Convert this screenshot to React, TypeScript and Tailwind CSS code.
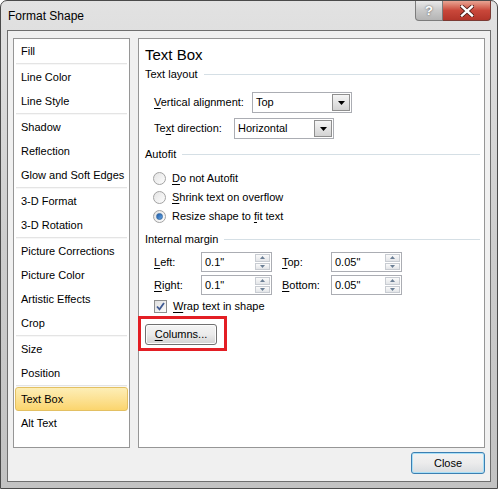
import React from 'react';

const groups: string[][] = [
  ['Fill'],
  ['Line Color', 'Line Style'],
  ['Shadow', 'Reflection', 'Glow and Soft Edges'],
  ['3-D Format', '3-D Rotation'],
  ['Picture Corrections', 'Picture Color', 'Artistic Effects', 'Crop'],
  ['Size', 'Position'],
  ['Text Box', 'Alt Text'],
];

const U = ({ children }: { children: React.ReactNode }) => (
  <span className="underline underline-offset-[2px] decoration-[1px]">{children}</span>
);

function Dropdown({ value, className }: { value: string; className: string }) {
  return (
    <div className={`flex h-[21px] items-stretch border border-[#abadb3] bg-white ${className}`}>
      <span className="flex-1 pl-[3px] leading-[19px]">{value}</span>
      <div className="m-[1px] flex w-[18px] items-center justify-center border border-[#8f8f8f] bg-gradient-to-b from-[#f5f5f5] to-[#d3d3d3]">
        <svg width="7" height="4" viewBox="0 0 7 4">
          <path d="M0 0h7L3.5 4z" fill="#000" />
        </svg>
      </div>
    </div>
  );
}

function Spinner({ value }: { value: string }) {
  return (
    <div className="flex h-[20px] w-[71px] border border-[#abadb3] bg-white">
      <span className="flex-1 pl-[3px] leading-[18px]">{value}</span>
      <div className="m-[1px] flex w-[15px] flex-col gap-[1px]">
        <div className="flex flex-1 items-center justify-center border border-[#c8ccd2] bg-gradient-to-b from-[#fafafa] to-[#e3e5e8]">
          <svg width="5" height="3" viewBox="0 0 5 3">
            <path d="M0 3h5L2.5 0z" fill="#6b7f95" />
          </svg>
        </div>
        <div className="flex flex-1 items-center justify-center border border-[#c8ccd2] bg-gradient-to-b from-[#fafafa] to-[#e3e5e8]">
          <svg width="5" height="3" viewBox="0 0 5 3">
            <path d="M0 0h5L2.5 3z" fill="#6b7f95" />
          </svg>
        </div>
      </div>
    </div>
  );
}

function GroupLabel({ text }: { text: string }) {
  return (
    <div className="flex h-[16px] items-center gap-[6px]">
      <span>{text}</span>
      <div className="h-px flex-1 bg-[#d5dfe5]" />
    </div>
  );
}

function Radio({ checked, children }: { checked?: boolean; children: React.ReactNode }) {
  return (
    <div className="flex h-[16px] items-center gap-[6px] pl-[8px]">
      <div className="flex h-[13px] w-[13px] items-center justify-center rounded-full border border-[#a2a2a2] bg-gradient-to-br from-[#e4e4e4] to-[#fdfdfd]">
        {checked && (
          <div className="h-[7px] w-[7px] rounded-full border border-[#3a6ea5] bg-gradient-to-br from-[#1f5aa8] to-[#62a6e6]" />
        )}
      </div>
      <span>{children}</span>
    </div>
  );
}

export default function App() {
  return (
    <div className="flex h-[489px] w-[498px] flex-col overflow-hidden rounded-t-[7px] border border-[#4a4a4a] bg-gradient-to-b from-[#e2e2e2] via-[#cdcdcd] to-[#c2c2c2] font-['Liberation_Sans',Arial,sans-serif] text-[11px] text-black">
      {/* title bar */}
      <div className="flex h-[29px] shrink-0 items-start justify-between">
        <span className="self-center pl-[7px] text-[12px]">Format Shape</span>
        <div className="mr-[6px] flex h-[20px]">
          <div className="flex w-[28px] items-center justify-center rounded-bl-[4px] border border-t-0 border-[#7c7c7c] bg-gradient-to-b from-[#e9e9e9] via-[#c9c9c9] to-[#b4b4b4] text-[13px] font-bold text-white [text-shadow:0_0_2px_#444]">
            ?
          </div>
          <div className="flex w-[48px] items-center justify-center rounded-br-[4px] border border-l-0 border-t-0 border-[#7c3a33] bg-gradient-to-b from-[#e8a493] via-[#c9473a] to-[#b3352a]">
            <svg width="14" height="12" viewBox="0 0 14 12">
              <path d="M2 1.5l10 9M12 1.5l-10 9" stroke="#4a1a14" strokeWidth="4" strokeLinecap="square" />
              <path d="M2 1.5l10 9M12 1.5l-10 9" stroke="#fff" strokeWidth="2.4" strokeLinecap="square" />
            </svg>
          </div>
        </div>
      </div>

      {/* client area */}
      <div className="mx-[6px] mb-[6px] flex flex-1 flex-col border border-[#6e6e6e] bg-[#f0f0f0] px-[5px] pt-[7px]">
        <div className="flex h-[410px] gap-[8px]">
          {/* category list */}
          <div className="w-[117px] border border-[#969696] bg-white">
            {groups.map((g, gi) => (
              <div key={gi}>
                {gi > 0 && <div className="mx-[2px] h-[2px] border-t border-[#e4e4e4] bg-[#f7f7f7]" />}
                {g.map((item) =>
                  item === 'Text Box' ? (
                    <div
                      key={item}
                      className="mx-px flex h-[24px] items-center rounded-[3px] border border-[#e3c063] bg-gradient-to-b from-[#fdeeb6] to-[#fbd56d] pl-[5px]"
                    >
                      {item}
                    </div>
                  ) : (
                    <div key={item} className="flex h-[24px] items-center pl-[7px]">
                      {item}
                    </div>
                  )
                )}
              </div>
            ))}
          </div>

          {/* settings panel */}
          <div className="flex flex-1 flex-col border border-[#969696] bg-white pl-[6px] pr-[4px] pt-[6px]">
            <div className="h-[20px] text-[15px] leading-[20px]">Text Box</div>
            <div className="mt-px">
              <GroupLabel text="Text layout" />
            </div>
            <div className="mt-[10px] flex items-center pl-[9px]">
              <span className="w-[98px]">
                <U>V</U>ertical alignment:
              </span>
              <Dropdown value="Top" className="w-[100px]" />
            </div>
            <div className="mt-[5px] flex items-center pl-[9px]">
              <span className="w-[80px]">
                Te<U>x</U>t direction:
              </span>
              <Dropdown value="Horizontal" className="w-[100px]" />
            </div>

            <div className="mt-[7px]">
              <GroupLabel text="Autofit" />
            </div>
            <div className="mt-[8px] flex flex-col gap-[3px]">
              <Radio>
                <U>D</U>o not Autofit
              </Radio>
              <Radio>
                <U>S</U>hrink text on overflow
              </Radio>
              <Radio checked>
                Resize shape to <U>f</U>it text
              </Radio>
            </div>

            <div className="mt-[7px]">
              <GroupLabel text="Internal margin" />
            </div>
            <div className="mt-[5px] flex flex-col gap-[3px] pl-[9px]">
              <div className="flex items-center">
                <span className="w-[47px]">
                  <U>L</U>eft:
                </span>
                <Spinner value={'0.1"'} />
                <span className="ml-[10px] w-[49px]">
                  <U>T</U>op:
                </span>
                <Spinner value={'0.05"'} />
              </div>
              <div className="flex items-center">
                <span className="w-[47px]">
                  <U>R</U>ight:
                </span>
                <Spinner value={'0.1"'} />
                <span className="ml-[10px] w-[49px]">
                  <U>B</U>ottom:
                </span>
                <Spinner value={'0.05"'} />
              </div>
            </div>
            <div className="mt-[3px] flex h-[16px] items-center gap-[6px] pl-[9px]">
              <div className="flex h-[13px] w-[13px] items-center justify-center border border-[#8e8f8f] bg-gradient-to-br from-[#e0e0e0] to-[#fbfbfb]">
                <svg width="9" height="9" viewBox="0 0 9 9">
                  <path d="M1 4.5l2.5 2.8L8 1" fill="none" stroke="#3f5a93" strokeWidth="1.8" />
                </svg>
              </div>
              <span>
                <U>W</U>rap text in shape
              </span>
            </div>

            <div className="relative mt-[10px] w-[72px]">
              <div className="flex h-[21px] items-center justify-center rounded-[3px] border border-[#707070] bg-gradient-to-b from-[#f4f4f4] via-[#ebebeb] to-[#d2d2d2] shadow-[inset_0_0_0_1px_#fcfcfc]">
                <span>
                  <U>C</U>olumns...
                </span>
              </div>
              <div className="pointer-events-none absolute -bottom-[6px] -left-[7px] -right-[10px] -top-[8px] border-[3px] border-[#e31e24]" />
            </div>
          </div>
        </div>

        {/* footer */}
        <div className="mt-[4px] flex justify-end">
          <div className="flex h-[22px] w-[74px] items-center justify-center rounded-[3px] border border-[#3c7fb1] bg-gradient-to-b from-[#f3f3f3] via-[#ececec] to-[#d9dde0] shadow-[inset_0_0_0_1px_#a8dff7]">
            Close
          </div>
        </div>
      </div>
    </div>
  );
}
